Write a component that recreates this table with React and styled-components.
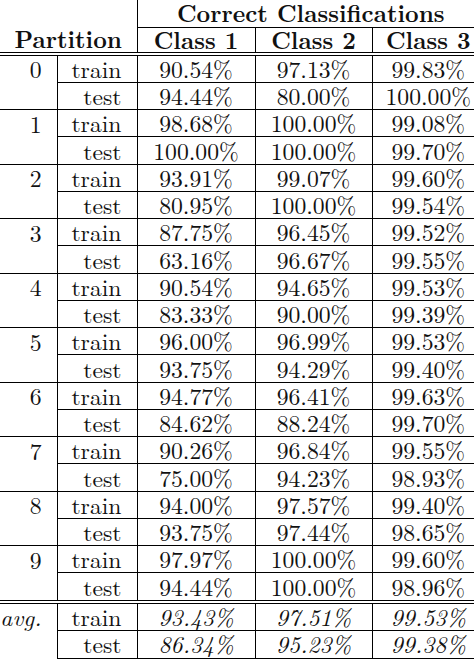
import styled, { createGlobalStyle } from "styled-components";

const GlobalStyle = createGlobalStyle`
  html, body {
    margin: 0;
    padding: 0;
    background: #fff;
    overflow: hidden;
  }
  body {
    font-family: "Latin Modern Roman", "Liberation Serif", serif;
    color: #111;
  }
`;

const font = `"Latin Modern Roman", "Liberation Serif", serif`;

const rows = [
  ["0", ["90.54%", "97.13%", "99.83%"], ["94.44%", "80.00%", "100.00%"]],
  ["1", ["98.68%", "100.00%", "99.08%"], ["100.00%", "100.00%", "99.70%"]],
  ["2", ["93.91%", "99.07%", "99.60%"], ["80.95%", "100.00%", "99.54%"]],
  ["3", ["87.75%", "96.45%", "99.52%"], ["63.16%", "96.67%", "99.55%"]],
  ["4", ["90.54%", "94.65%", "99.53%"], ["83.33%", "90.00%", "99.39%"]],
  ["5", ["96.00%", "96.99%", "99.53%"], ["93.75%", "94.29%", "99.40%"]],
  ["6", ["94.77%", "96.41%", "99.63%"], ["84.62%", "88.24%", "99.70%"]],
  ["7", ["90.26%", "96.84%", "99.55%"], ["75.00%", "94.23%", "98.93%"]],
  ["8", ["94.00%", "97.57%", "99.40%"], ["93.75%", "97.44%", "98.65%"]],
  ["9", ["97.97%", "100.00%", "99.60%"], ["94.44%", "100.00%", "98.96%"]],
];

const avg = [
  ["93.43%", "97.51%", "99.53%"],
  ["86.34%", "95.23%", "99.38%"],
];

const Table = styled.table`
  border-collapse: collapse;
  table-layout: fixed;
  width: 484px;
  font-family: ${font};
  font-size: 23.7px;
  line-height: 1;
  color: #111;
`;

const Row = styled.tr`
  height: ${(p) => p.$h || 27.25}px;
`;

const Rule = styled.tr`
  height: 3px;
  td {
    padding: 0;
    border-top: 1px solid #000;
    border-bottom: 1px solid #000;
    border-right: none;
  }
`;

const Head = styled.th`
  font-family: ${font};
  font-size: 23.7px;
  font-weight: bold;
  text-align: center;
  padding: 0;
  white-space: nowrap;
  border-right: ${(p) => (p.$last ? "none" : "1px solid #000")};
  border-bottom: ${(p) => (p.$under ? "1px solid #000" : "none")};
  vertical-align: middle;
`;

const Cell = styled.td`
  font-family: ${font};
  font-size: 23.7px;
  padding: 0 ${(p) => (p.$align === "right" ? "15px" : "0")} 0 0;
  text-align: ${(p) => p.$align || "center"};
  vertical-align: middle;
  white-space: nowrap;
  font-style: ${(p) => (p.$italic ? "italic" : "normal")};
  border-right: ${(p) => (p.$last ? "none" : "1px solid #000")};
  border-bottom: ${(p) => (p.$under ? "1px solid #000" : "none")};
`;

const Values = ({ values, italic }) =>
  values.map((v, i) => (
    <Cell key={i} $under $italic={italic} $last={i === values.length - 1}>
      {v}
    </Cell>
  ));

const App = () => {
  return (
    <>
      <GlobalStyle />
      <Table>
        <colgroup>
          <col style={{ width: 57 }} />
          <col style={{ width: 80 }} />
          <col style={{ width: 118 }} />
          <col style={{ width: 117 }} />
          <col style={{ width: 112 }} />
        </colgroup>
        <thead>
          <Row $h={27}>
            <Head colSpan={2} />
            <Head colSpan={3} $under $last>
              Correct Classifications
            </Head>
          </Row>
          <Row $h={25}>
            <Head colSpan={2}>Partition</Head>
            <Head>Class 1</Head>
            <Head>Class 2</Head>
            <Head $last>Class 3</Head>
          </Row>
          <Rule>
            <td colSpan={5} />
          </Rule>
        </thead>
        <tbody>
          {rows.map(([part, train, test]) => [
            <Row key={part + "a"}>
              <Cell $align="right">{part}</Cell>
              <Cell $align="right" $under>
                train
              </Cell>
              <Values values={train} />
            </Row>,
            <Row key={part + "b"}>
              <Cell $under />
              <Cell $align="right" $under>
                test
              </Cell>
              <Values values={test} />
            </Row>,
          ])}
          <Rule>
            <td colSpan={5} />
          </Rule>
          <Row $h={27.5}>
            <Cell $align="right" $italic>
              avg.
            </Cell>
            <Cell $align="right" $under>
              train
            </Cell>
            <Values values={avg[0]} italic />
          </Row>
          <Row $h={27.5}>
            <Cell />
            <Cell $align="right" $under>
              test
            </Cell>
            <Values values={avg[1]} italic />
          </Row>
        </tbody>
      </Table>
    </>
  );
};

export default App;
